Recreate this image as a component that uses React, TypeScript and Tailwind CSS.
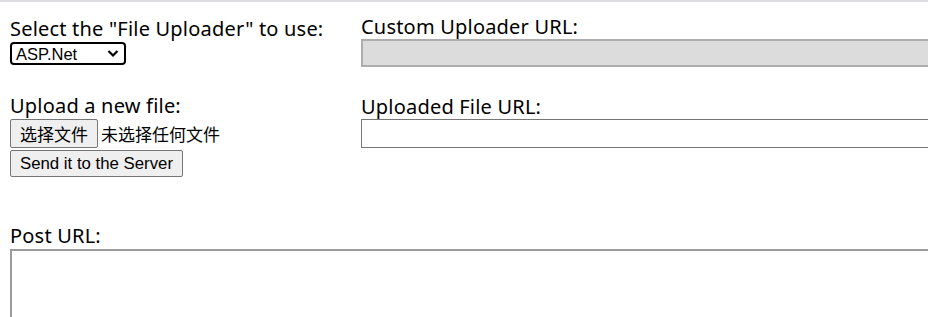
export default function App() {
  return (
    <div className="h-screen overflow-hidden border-t-2 border-[#dfdfe3] bg-white text-black">
      <div className="flex pl-[10px]">
        <div className="w-[351px] shrink-0 pt-[14px]">
          <div className="font-['Noto_Sans',sans-serif] text-[20px] leading-[25px] tracking-[0.2px]">
            Select the "File Uploader" to use:
          </div>
          {/* dropdown drawn by hand so text and chevron match */}
          <div className="mt-[1px] flex h-[23px] w-[116px] items-center justify-between rounded-[4px] border-2 border-black pl-[4px] pr-[5px]">
            <span className="font-['Liberation_Sans',Arial,sans-serif] text-[16.5px] leading-[18px]">
              ASP.Net
            </span>
            <svg width="12" height="9" viewBox="0 0 12 9" fill="none">
              <path d="M1.5 2 6 6.5 10.5 2" stroke="black" strokeWidth="2.2" />
            </svg>
          </div>

          <div className="mt-[28px] font-['Noto_Sans',sans-serif] text-[20px] leading-[25px] tracking-[0.2px]">
            Upload a new file:
          </div>
          <div className="mt-[1px] flex items-center">
            <button className="h-[29px] rounded-[2px] border border-[#767676] bg-[#efefef] px-[9px] font-['Noto_Sans_CJK_SC',sans-serif] text-[17px] leading-[20px]">
              选择文件
            </button>
            <span className="ml-[3px] font-['Noto_Sans_CJK_SC',sans-serif] text-[17px] leading-[20px]">
              未选择任何文件
            </span>
          </div>
          <button className="mt-[2px] h-[27px] rounded-[2px] border border-[#767676] bg-[#efefef] px-[9px] font-['Liberation_Sans',Arial,sans-serif] text-[16.8px] leading-[19px]">
            Send it to the Server
          </button>
        </div>

        <div className="min-w-0 flex-1 pt-[12px]">
          <div className="font-['Noto_Sans',sans-serif] text-[20px] leading-[25px] tracking-[0.2px]">
            Custom Uploader URL:
          </div>
          <input
            disabled
            className="block h-[28px] w-[640px] border-2 border-[#adadad] bg-[#dcdcdc]"
          />
          <div className="mt-[27px] font-['Noto_Sans',sans-serif] text-[20px] leading-[25px] tracking-[0.2px]">
            Uploaded File URL:
          </div>
          <input className="block h-[29px] w-[640px] border border-[#767676] bg-white outline-none" />
        </div>
      </div>

      <div className="pl-[10px]">
        <div className="mt-[46px] font-['Noto_Sans',sans-serif] text-[20px] leading-[25px] tracking-[0.2px]">
          Post URL:
        </div>
        <textarea className="mt-[1px] block h-[120px] w-[960px] resize-none border-2 border-[#9b9b9b] outline-none" />
      </div>
    </div>
  );
}
